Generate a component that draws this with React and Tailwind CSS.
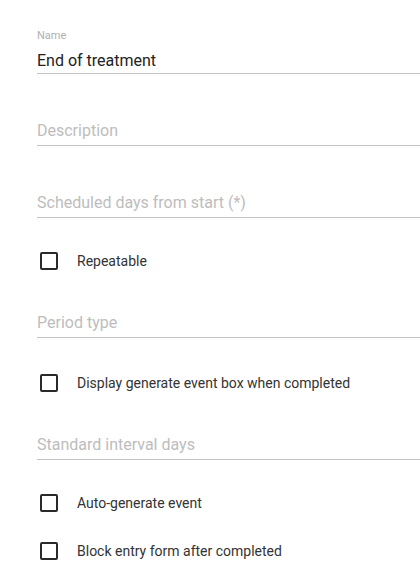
import React from 'react';

function TextField({ label, value }) {
  return (
    <div className="flex h-[72px] flex-col justify-end pb-[7px]">
      {value && <div className="mb-[10px] text-[11px] leading-[12px] text-[#b0b0b0]">{label}</div>}
      <div className={`border-b border-[#c4c4c4] text-[16px] leading-[18px] ${value ? 'pb-[3px] text-[#222222]' : 'pb-[5px] text-[#bdbdbd]'}`}>
        {value || label}
      </div>
    </div>
  );
}

function Checkbox({ label, className }) {
  return (
    <div className={className}>
      <label className="flex h-6 items-center gap-[19px] pl-[3px]">
        <span className="h-[18px] w-[18px] rounded-[2px] border-2 border-[#2a2a2a]" />
        <span className="text-[14px] text-[#333333]">{label}</span>
      </label>
    </div>
  );
}

export default function App() {
  return (
    <div className="min-h-[584px] w-[420px] overflow-hidden bg-white pl-[37px] pt-[9px]" style={{ fontFamily: 'Roboto, "Liberation Sans", sans-serif' }}>
      <div className="-mr-4 flex flex-col">
        <TextField label="Name" value="End of treatment" />
        <TextField label="Description" />
        <TextField label="Scheduled days from start (*)" />
        <Checkbox label="Repeatable" className="h-12 pt-6" />
        <TextField label="Period type" />
        <Checkbox label="Display generate event box when completed" className="h-[50px] pt-[26px]" />
        <TextField label="Standard interval days" />
        <Checkbox label="Auto-generate event" className="h-12 pt-6" />
        <Checkbox label="Block entry form after completed" className="pt-6" />
      </div>
    </div>
  );
}
